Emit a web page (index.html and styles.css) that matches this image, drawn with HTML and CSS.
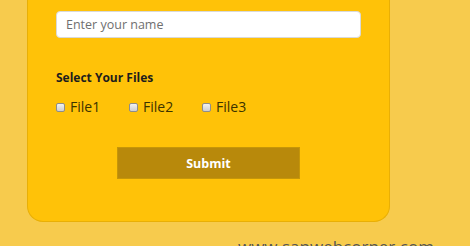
FILE: index.html
```html
<!DOCTYPE html>
<html>
<head>
<meta charset="utf-8">
<link rel="stylesheet" href="styles.css">
</head>
<body>
<div class="page">
  <form class="card">
    <input class="name" type="text" placeholder="Enter your name">
    <div class="files-label">Select Your Files</div>
    <div class="files">
      <label class="file"><input type="checkbox" class="cb"><span>File1</span></label>
      <label class="file"><input type="checkbox" class="cb"><span>File2</span></label>
      <label class="file"><input type="checkbox" class="cb"><span>File3</span></label>
    </div>
    <div class="actions">
      <button type="button" class="submit">Submit</button>
    </div>
  </form>
  <div class="site">www.sanwebcorner.com</div>
</div>
</body>
</html>
```
FILE: styles.css
```css
html, body {
  margin: 0;
  padding: 0;
  background: #F7CB4D;
  font-family: "Open Sans", "Noto Sans", sans-serif;
  overflow: hidden;
}
.page {
  width: 470px;
  height: 246px;
  overflow: hidden;
}
.card {
  box-sizing: border-box;
  margin: 0 0 0 27px;
  width: 363px;
  background: #FFC208;
  border: 1px solid #E9AF05;
  border-top: 0;
  border-radius: 0 0 16px 16px;
  padding: 11px 28px 42px 28px;
  display: flex;
  flex-direction: column;
}
.name {
  box-sizing: border-box;
  height: 27px;
  width: 305px;
  border: 1px solid #D9D9D9;
  border-radius: 4px;
  background: #fff;
  padding: 0 9px;
  font-family: inherit;
  font-size: 12.5px;
  color: #333;
  outline: none;
}
.name::placeholder {
  color: #6f6f6f;
}
.files-label {
  margin-top: 32px;
  font-size: 12px;
  font-weight: 700;
  color: #1d1d1d;
  line-height: 16px;
}
.files {
  margin-top: 12px;
  display: flex;
}
.file {
  width: 73px;
  display: flex;
  align-items: center;
  font-size: 14px;
  line-height: 18px;
  color: #3b3300;
}
.cb {
  appearance: none;
  -webkit-appearance: none;
  box-sizing: border-box;
  width: 9px;
  height: 9px;
  margin: 0 5px 0 0;
  border: 1px solid #8d8d8d;
  border-radius: 2px;
  background: linear-gradient(#f2f2f2, #cfcfcf);
}
.actions {
  margin-top: 31px;
  display: flex;
  justify-content: center;
}
.submit {
  box-sizing: border-box;
  width: 183px;
  height: 32px;
  background: #B8890B;
  border: 1px solid #C69608;
  color: #fff;
  font-family: inherit;
  font-weight: 700;
  font-size: 12.5px;
  padding: 0;
}
.site {
  margin: 13px 0 0 238px;
  font-size: 17px;
  color: #555;
  line-height: 24px;
}
```
